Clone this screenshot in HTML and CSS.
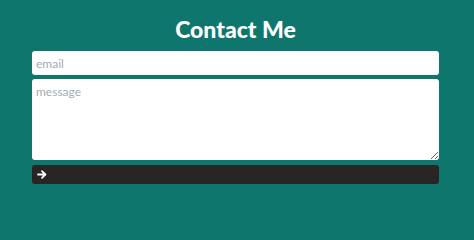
FILE: index.html
```html
<!DOCTYPE html>
<html>
<head>
<meta charset="utf-8">
<link rel="stylesheet" href="styles.css">
</head>
<body>
<main class="page">
  <h1 class="title">Contact Me</h1>
  <form class="form">
    <input class="field" type="email" placeholder="email">
    <textarea class="field area" placeholder="message"></textarea>
    <button class="send" type="button">
      <svg class="arrow" width="10" height="9" viewBox="0 0 10 9"><path d="M1 4.5H8.2M5 1.2L8.4 4.5L5 7.8" fill="none" stroke="#fff" stroke-width="1.8" stroke-linecap="round" stroke-linejoin="round"/></svg>
    </button>
  </form>
</main>
</body>
</html>
```
FILE: styles.css
```css
html {
  background: #0f766e;
}
body {
  margin: 0;
  padding: 0;
  background: #0f766e;
}
.page {
  padding: 14px 35px 21px 32px;
  font-family: Lato, "Open Sans", sans-serif;
}
.title {
  margin: 0;
  text-align: center;
  color: #fff;
  font-size: 23px;
  font-weight: 900;
  line-height: 30px;
  height: 37px;
}
.form {
  display: flex;
  flex-direction: column;
  gap: 4px;
}
.field {
  box-sizing: border-box;
  display: block;
  width: 100%;
  margin: 0;
  border: none;
  border-radius: 3px;
  background: #fff;
  font-family: Lato, "Open Sans", sans-serif;
  font-size: 12px;
  color: #333;
  padding: 0 4px;
  height: 24px;
  outline: none;
}
.field::placeholder {
  color: #a3acb3;
}
.area {
  height: 81px;
  padding: 5px 4px;
  resize: vertical;
}
.send {
  margin-top: 1px;
  box-sizing: border-box;
  display: flex;
  align-items: center;
  width: 100%;
  height: 19px;
  border: none;
  border-radius: 3px;
  background: #292524;
  padding: 0 0 0 5px;
}
.arrow {
  display: block;
}
```
